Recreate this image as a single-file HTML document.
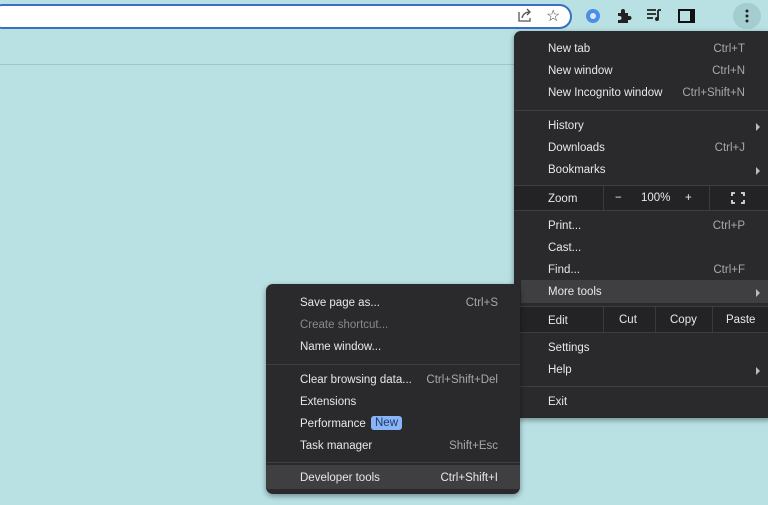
<!DOCTYPE html>
<html><head><style>
body{margin:0;width:768px;height:505px;background:#b9e1e4;position:relative;overflow:hidden;font-family:"Liberation Sans",sans-serif;font-size:11.5px;color:#e8e8e8}
.a{position:absolute;white-space:nowrap}
.r{position:absolute;white-space:nowrap;color:#a8a8a8;text-align:right}
.menu{position:absolute;background:#2a2a2c;border-radius:7px;box-shadow:0 2px 6px rgba(0,0,0,.4)}
.sep{position:absolute;height:1px;background:#3e3e40}
.vs{position:absolute;width:1px;background:#3a3a3c}
.arr{position:absolute;width:0;height:0;border-left:4px solid #bbb;border-top:4px solid transparent;border-bottom:4px solid transparent}
</style></head><body>
<div class="a" style="left:-10px;top:4px;width:582px;height:25px;background:#fff;border:2px solid #3a6fc4;border-radius:14px;box-sizing:border-box"></div>
<div class="a" style="left:0;top:64px;width:514px;height:1px;background:#9fc6c9"></div>
<svg class="a" style="left:516px;top:8px" width="18" height="16" viewBox="0 0 18 16"><path d="M3 4v9h11v-3M6 10c1-4 4-6 8-6M11 1l3 3-3 3" fill="none" stroke="#555" stroke-width="1.3"/></svg>
<div class="a" style="left:546px;top:6px;font-size:16px;color:#444">☆</div>
<div class="a" style="left:586px;top:9px;width:14px;height:14px;border-radius:50%;background:#4a8ee8"><div style="margin:4px;width:6px;height:6px;border-radius:50%;background:#dbe8fa"></div></div>
<svg class="a" style="left:616px;top:8px" width="16" height="16" viewBox="0 0 16 16"><path d="M2 5h3V3a2 2 0 0 1 4 0v2h3v3h1.5a2 2 0 0 1 0 4H12v3H2v-3h1.5a2 2 0 0 0 0-4H2z" fill="#222"/></svg>
<svg class="a" style="left:646px;top:8px" width="16" height="14"><path d="M1 2h9M1 6h9M1 10h6M12 2v9M12 2h3" stroke="#222" stroke-width="1.8" fill="none"/><circle cx="11" cy="11" r="2" fill="#222"/></svg>
<div class="a" style="left:678px;top:9px;width:10px;height:10px;border:2px solid #111;border-right-width:5px"></div>
<div class="a" style="left:733px;top:3px;width:28px;height:26px;border-radius:13px;background:#a4cdd0"></div>
<svg class="a" style="left:744px;top:9px" width="6" height="14"><circle cx="3" cy="2" r="1.5" fill="#222"/><circle cx="3" cy="7" r="1.5" fill="#222"/><circle cx="3" cy="12" r="1.5" fill="#222"/></svg>

<div class="menu" style="left:514px;top:31px;width:260px;height:387px"></div>
<div class="a" style="left:548px;top:43px">New tab</div><div class="r" style="right:23px;top:43px">Ctrl+T</div>
<div class="a" style="left:548px;top:65px">New window</div><div class="r" style="right:23px;top:65px">Ctrl+N</div>
<div class="a" style="left:548px;top:87px">New Incognito window</div><div class="r" style="right:23px;top:87px">Ctrl+Shift+N</div>
<div class="sep" style="left:514px;top:110px;width:254px"></div>
<div class="a" style="left:548px;top:120px">History</div><div class="arr" style="left:756px;top:123px"></div>
<div class="a" style="left:548px;top:142px">Downloads</div><div class="r" style="right:23px;top:142px">Ctrl+J</div>
<div class="a" style="left:548px;top:164px">Bookmarks</div><div class="arr" style="left:756px;top:167px"></div>
<div class="sep" style="left:514px;top:185px;width:254px"></div>
<div class="a" style="left:514px;top:186px;width:254px;height:24px;background:#232325"></div>
<div class="vs" style="left:603px;top:186px;height:24px"></div><div class="vs" style="left:709px;top:186px;height:24px"></div>
<div class="a" style="left:548px;top:193px">Zoom</div>
<div class="a" style="left:615px;top:192px">−</div><div class="a" style="left:641px;top:192px">100%</div><div class="a" style="left:685px;top:192px">+</div>
<svg class="a" style="left:731px;top:192px" width="14" height="12"><path d="M1 4V1h3M10 1h3v3M13 8v3h-3M4 11H1V8" stroke="#ddd" stroke-width="1.8" fill="none"/></svg>
<div class="sep" style="left:514px;top:210px;width:254px"></div>
<div class="a" style="left:548px;top:220px">Print...</div><div class="r" style="right:23px;top:220px">Ctrl+P</div>
<div class="a" style="left:548px;top:242px">Cast...</div>
<div class="a" style="left:548px;top:264px">Find...</div><div class="r" style="right:23px;top:264px">Ctrl+F</div>
<div class="a" style="left:521px;top:280px;width:247px;height:23px;background:#3f3f42"></div>
<div class="a" style="left:548px;top:286px">More tools</div><div class="arr" style="left:756px;top:289px"></div>
<div class="sep" style="left:514px;top:306px;width:254px"></div>
<div class="a" style="left:514px;top:307px;width:254px;height:25px;background:#232325"></div>
<div class="vs" style="left:603px;top:307px;height:25px"></div><div class="vs" style="left:655px;top:307px;height:25px"></div><div class="vs" style="left:712px;top:307px;height:25px"></div>
<div class="a" style="left:548px;top:315px">Edit</div><div class="a" style="left:619px;top:314px">Cut</div><div class="a" style="left:670px;top:314px">Copy</div><div class="a" style="left:726px;top:314px">Paste</div>
<div class="sep" style="left:514px;top:332px;width:254px"></div>
<div class="a" style="left:548px;top:342px">Settings</div>
<div class="a" style="left:548px;top:364px">Help</div><div class="arr" style="left:756px;top:367px"></div>
<div class="sep" style="left:514px;top:386px;width:254px"></div>
<div class="a" style="left:548px;top:396px">Exit</div>

<div class="menu" style="left:266px;top:284px;width:254px;height:210px"></div>
<div class="a" style="left:300px;top:297px">Save page as...</div><div class="r" style="right:270px;top:297px">Ctrl+S</div>
<div class="a" style="left:300px;top:319px;color:#8a8a8a">Create shortcut...</div>
<div class="a" style="left:300px;top:341px">Name window...</div>
<div class="sep" style="left:266px;top:364px;width:254px"></div>
<div class="a" style="left:300px;top:374px">Clear browsing data...</div><div class="r" style="right:270px;top:374px">Ctrl+Shift+Del</div>
<div class="a" style="left:300px;top:396px">Extensions</div>
<div class="a" style="left:300px;top:418px">Performance</div>
<div class="a" style="left:371px;top:416px;background:#8ab4f8;color:#1f3a66;padding:1px 4px;border-radius:3px">New</div>
<div class="a" style="left:300px;top:440px">Task manager</div><div class="r" style="right:270px;top:440px">Shift+Esc</div>
<div class="sep" style="left:266px;top:462px;width:254px"></div>
<div class="a" style="left:266px;top:465px;width:254px;height:24px;background:#3f3f42"></div>
<div class="a" style="left:300px;top:472px">Developer tools</div><div class="r" style="right:270px;top:472px;color:#e8e8e8">Ctrl+Shift+I</div>
</body></html>
